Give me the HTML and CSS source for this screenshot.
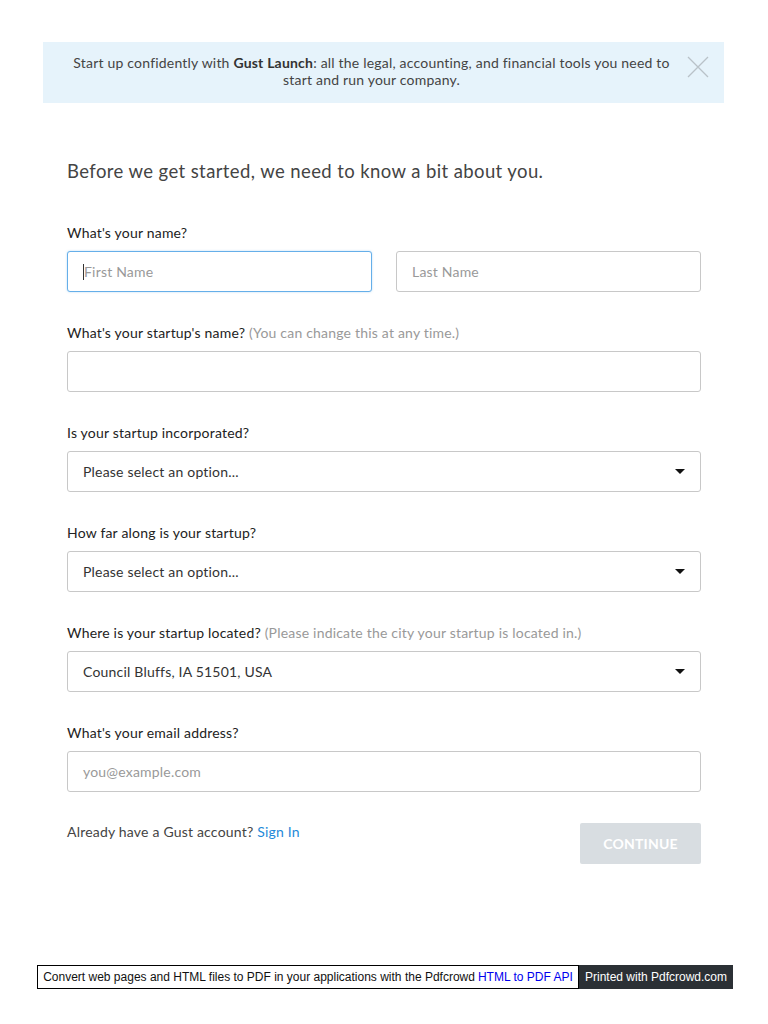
FILE: index.html
```html
<!DOCTYPE html>
<html>
<head>
<meta charset="utf-8">
<link rel="stylesheet" href="styles.css">
</head>
<body>
<div class="page">
  <div class="banner">
    <p class="banner-text">Start up confidently with <b>Gust Launch</b>: all the legal, accounting, and financial tools you need to start and run your company.</p>
    <svg class="close" width="22" height="22" viewBox="0 0 22 22"><path d="M1 1 L21 21 M21 1 L1 21" stroke="#b9c2c8" stroke-width="1.3" fill="none"/></svg>
  </div>
  <form class="form">
    <h1 class="title">Before we get started, we need to know a bit about you.</h1>
    <div class="field">
      <div class="label">What's your name?</div>
      <div class="row">
        <div class="input focus"><span class="caret"></span><span class="ph">First Name</span></div>
        <div class="input"><span class="ph">Last Name</span></div>
      </div>
    </div>
    <div class="field">
      <div class="label">What's your startup's name? <span class="hint">(You can change this at any time.)</span></div>
      <div class="input"></div>
    </div>
    <div class="field">
      <div class="label">Is your startup incorporated?</div>
      <div class="input select"><span class="val">Please select an option...</span><span class="arrow"></span></div>
    </div>
    <div class="field">
      <div class="label">How far along is your startup?</div>
      <div class="input select"><span class="val">Please select an option...</span><span class="arrow"></span></div>
    </div>
    <div class="field">
      <div class="label">Where is your startup located? <span class="hint">(Please indicate the city your startup is located in.)</span></div>
      <div class="input select"><span class="val">Council Bluffs, IA 51501, USA</span><span class="arrow"></span></div>
    </div>
    <div class="field">
      <div class="label">What's your email address?</div>
      <div class="input"><span class="ph">you@example.com</span></div>
    </div>
    <div class="actions">
      <div class="signin">Already have a Gust account? <a class="link">Sign In</a></div>
      <div class="btn">CONTINUE</div>
    </div>
  </form>
  <div class="pdfbar">
    <div class="pdf-left">Convert web pages and HTML files to PDF in your applications with the Pdfcrowd <span class="pdf-link">HTML to PDF API</span></div>
    <div class="pdf-right">Printed with Pdfcrowd.com</div>
  </div>
</div>
</body>
</html>
```

FILE: styles.css
```css
* { box-sizing: border-box; }
html, body { margin: 0; padding: 0; background: #fff; }
body { font-family: Lato, "Open Sans", sans-serif; color: #333; letter-spacing: 0.2px; }
.page { width: 768px; height: 1024px; padding-top: 42px; }
.banner {
  position: relative;
  margin-left: 43px;
  width: 681px;
  height: 61px;
  background: #e6f3fb;
  display: flex;
  align-items: center;
  justify-content: center;
  padding: 0 46px 3px 22px;
}
.banner-text { margin: 0; font-size: 14px; line-height: 17px; text-align: center; color: #444; }
.banner-text b { font-weight: 700; color: #333; }
.close { position: absolute; right: 15px; top: 14px; }
.form { margin-left: 67px; width: 634px; padding-top: 56px; }
.title { margin: 0 0 41px; font-size: 18.5px; font-weight: 400; line-height: 24px; color: #444; letter-spacing: 0.4px; }
.field { margin-bottom: 32px; }
.label { font-size: 14px; line-height: 17px; margin-bottom: 10px; color: #222; }
.hint { color: #999; }
.row { display: flex; gap: 24px; }
.row .input { flex: 1; }
.input {
  position: relative;
  height: 41px;
  border: 1px solid #c8c8c8;
  border-radius: 3px;
  display: flex;
  align-items: center;
  padding: 0 15px;
  font-size: 14px;
  background: #fff;
}
.input.focus { border-color: #66afe9; box-shadow: 0 0 2px rgba(102,175,233,0.5); }
.caret { width: 1px; height: 16px; background: #333; }
.ph { color: #999; }
.val { color: #333; flex: 1; }
.arrow { width: 0; height: 0; border-left: 5px solid transparent; border-right: 5px solid transparent; border-top: 5px solid #111; }
.actions { display: flex; justify-content: space-between; align-items: flex-start; margin-top: -1px; }
.signin { font-size: 14px; line-height: 18px; color: #444; padding-top: 0; }
.link { color: #1f8ad9; }
.btn {
  width: 121px;
  height: 41px;
  background: #d8dde1;
  color: #fff;
  font-weight: 700;
  font-size: 14px;
  display: flex;
  align-items: center;
  justify-content: center;
  border-radius: 2px;
  margin-top: 0;
}
.pdfbar { display: flex; margin-left: 37px; margin-top: 101px; width: 696px; height: 24px; font-family: "Liberation Sans", Arial, sans-serif; font-size: 12px; letter-spacing: 0; }
.pdf-left { width: 542px; border: 1px solid #000; display: flex; align-items: center; justify-content: center; color: #111; }
.pdf-link { color: #0000ee; margin-left: 3px; }
.pdf-right { flex: 1; background: #2b3035; color: #fff; display: flex; align-items: center; justify-content: center; }
```
